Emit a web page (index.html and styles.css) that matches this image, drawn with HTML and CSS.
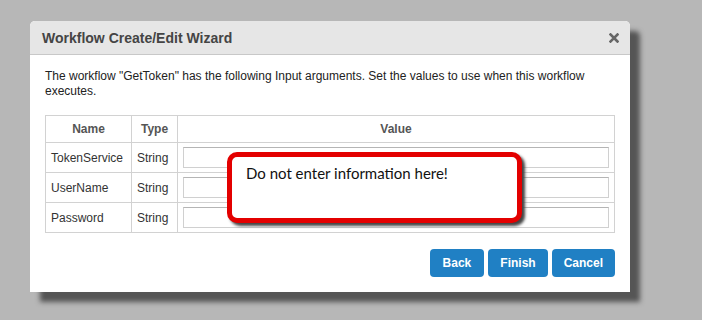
FILE: index.html
```html
<!DOCTYPE html>
<html lang="en">

<head>
  <title>Workflow Create/Edit Wizard</title>
  <meta charset="utf-8">
  <link rel="stylesheet" href="styles.css">
</head>

<body>
  <div class="dialog">
    <!-- Title bar -->
    <div class="dialog-header">
      <span class="dialog-title">Workflow Create/Edit Wizard</span>
      <span class="close">
        <svg width="10" height="10" viewBox="0 0 10 10">
          <path d="M1.5 1.5 L8.5 8.5 M8.5 1.5 L1.5 8.5" stroke="#666" stroke-width="2.6" stroke-linecap="square" />
        </svg>
      </span>
    </div>
    <div class="dialog-body">
      <p class="intro">The workflow "GetToken" has the following Input arguments. Set the values to use when this workflow executes.</p>
      <!-- Arguments -->
      <table class="args">
        <tr>
          <th class="col-name">Name</th>
          <th class="col-type">Type</th>
          <th>Value</th>
        </tr>
        <tr>
          <td>TokenService</td>
          <td>String</td>
          <td><input type="text" class="value-input"></td>
        </tr>
        <tr>
          <td>UserName</td>
          <td>String</td>
          <td><input type="text" class="value-input"></td>
        </tr>
        <tr>
          <td>Password</td>
          <td>String</td>
          <td><input type="text" class="value-input"></td>
        </tr>
      </table>
      <div class="buttons">
        <button class="btn">Back</button>
        <button class="btn">Finish</button>
        <button class="btn">Cancel</button>
      </div>
    </div>
  </div>

  <!-- Annotation callout -->
  <div class="callout">Do not enter information here!</div>
</body>

</html>
```

FILE: styles.css
```css
* {
  box-sizing: border-box;
}

body {
  margin: 0;
  background-color: #b7b7b7;
  font-family: "Liberation Sans", Arial, sans-serif;
  height: 320px;
  overflow: hidden;
}

/* Dialog box */
.dialog {
  width: 600px;
  margin: 21px 0 0 30px;
  background-color: #fff;
  border-radius: 5px 5px 0 0;
  box-shadow: 10px 10px 5px #555;
}

.dialog-header {
  display: flex;
  align-items: center;
  justify-content: space-between;
  height: 34px;
  padding: 0 11px 0 12px;
  background-color: #e6e6e6;
  border-bottom: 1px solid #c8c8c8;
  border-radius: 5px 5px 0 0;
}

.dialog-title {
  font-size: 14px;
  font-weight: bold;
  color: #444;
}

.close {
  display: flex;
  padding-top: 1px;
}

.dialog-body {
  padding: 14px 15px 15px 15px;
}

.intro {
  margin: 0;
  font-size: 12px;
  line-height: 15px;
  color: #222;
}

/* Arguments table */
.args {
  width: 570px;
  margin-top: 16px;
  border-collapse: collapse;
  font-size: 12px;
  color: #333;
}

.args th,
.args td {
  border: 1px solid #d2d2d2;
  padding: 3px 5px;
}

.args th {
  height: 27px;
  font-weight: bold;
  color: #555;
  text-align: center;
}

.args td {
  height: 30px;
}

.col-name {
  width: 86px;
}

.col-type {
  width: 46px;
}

.value-input {
  display: block;
  width: 100%;
  height: 21px;
  margin: 0;
  border: 1px solid #d0d0d0;
  border-top-color: #b5b5b5;
  background: #fff;
}

/* Footer buttons */
.buttons {
  display: flex;
  justify-content: flex-end;
  gap: 4px;
  margin-top: 16px;
}

.btn {
  height: 28px;
  padding: 0 12px;
  border: none;
  border-radius: 4px;
  background-color: #2080c4;
  color: #fff;
  font-family: "Liberation Sans", Arial, sans-serif;
  font-size: 12px;
  font-weight: bold;
}

.btn:first-child {
  padding: 0 13px;
}

/* Red note on top of the dialog */
.callout {
  position: absolute;
  left: 227px;
  top: 152px;
  width: 295px;
  height: 71px;
  padding: 7px 14px;
  background-color: #fff;
  border: 5px solid #e30000;
  border-radius: 10px;
  box-shadow: 3px 3px 3px #444;
  font-family: Lato, "Open Sans", sans-serif;
  font-size: 15px;
  color: #111;
}
```
